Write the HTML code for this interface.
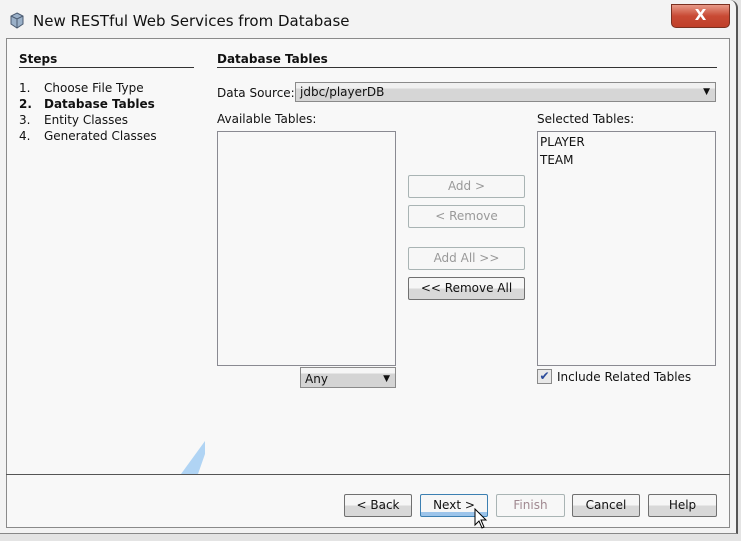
<!DOCTYPE html>
<html><head><style>
body{margin:0;width:741px;height:541px;background:#e4e4e4;position:relative;overflow:hidden;font-family:"DejaVu Sans","Liberation Sans",sans-serif;font-size:12px;color:#111}
.a{position:absolute}
.win{left:0;top:0;width:736px;height:533px;background:#f3f3f3;border-right:2px solid #555;border-bottom:1px solid #888;border-top-right-radius:8px}
.panel{left:6px;top:38px;width:722px;height:488px;background:#f8f8f8;border:1px solid #8a8a8a}
.btn{position:absolute;height:21px;border:1px solid #707070;border-radius:2px;background:linear-gradient(#f6f6f6 50%,#d8d8d8 50%);text-align:center;line-height:21px;font-size:12px;color:#111;box-sizing:border-box}
.dis{border-color:#a9b4b4;background:#f7f7f7;color:#999}
.list{border:1px solid #8a8a92;background:#f8f8f8}
.n{display:inline-block;width:25px}
</style></head><body>
<div class="a win"></div>
<svg class="a" style="left:9px;top:12px" width="16" height="17" viewBox="0 0 16 17"><path d="M8 1L14 4V12L8 16L2 12V4Z" fill="#9ab0c8" stroke="#4a5a70"/><path d="M2 4L8 7L14 4M8 7V16" fill="none" stroke="#4a5a70"/></svg>
<div class="a" style="left:33px;top:12px;font-size:15px;color:#111">New RESTful Web Services from Database</div>
<div class="a" style="left:671px;top:4px;width:57px;height:22px;border:1px solid #7a3020;border-radius:0 0 5px 5px;background:linear-gradient(#e89a88,#c84a34 50%,#c0402a);color:#fff;text-align:center;font-weight:bold;font-size:15px;line-height:21px">X</div>
<div class="a panel"></div>
<div class="a" style="left:19px;top:52px;font-weight:bold">Steps</div>
<div class="a" style="left:19px;top:67px;width:175px;border-top:1px solid #333"></div>
<div class="a" style="left:19px;top:80px;line-height:16px"><span class="n">1.</span>Choose File Type<br><b><span class="n">2.</span>Database Tables</b><br><span class="n">3.</span>Entity Classes<br><span class="n">4.</span>Generated Classes</div>
<div class="a" style="left:217px;top:52px;font-weight:bold">Database Tables</div>
<div class="a" style="left:217px;top:67px;width:500px;border-top:1px solid #333"></div>
<div class="a" style="left:217px;top:86px">Data Source:</div>
<div class="a" style="left:295px;top:82px;width:421px;height:20px;border:1px solid #8a8a8a;background:linear-gradient(#f0f0f0 30%,#d6d6d6 30%);box-sizing:border-box;padding-left:4px;line-height:19px">jdbc/playerDB<span style="position:absolute;right:5px;top:0;font-size:9px">▼</span></div>
<div class="a" style="left:217px;top:112px">Available Tables:</div>
<div class="a" style="left:537px;top:112px">Selected Tables:</div>
<div class="a list" style="left:217px;top:131px;width:177px;height:233px"></div>
<div class="a list" style="left:537px;top:131px;padding:1px 2px;box-sizing:border-box;width:179px;height:235px;line-height:18px">PLAYER<br>TEAM</div>
<div class="a" style="left:300px;top:367px;width:96px;height:21px;border:1px solid #8a8a8a;background:linear-gradient(#f6f6f6 30%,#d4d4d4 30%);box-sizing:border-box;padding-left:4px;line-height:22px">Any<span style="position:absolute;right:5px;top:0;font-size:9px">▼</span></div>
<div class="btn dis" style="left:408px;top:175px;width:117px;height:23px;line-height:21px">Add &gt;</div>
<div class="btn dis" style="left:408px;top:205px;width:117px;height:23px;line-height:21px">&lt; Remove</div>
<div class="btn dis" style="left:408px;top:247px;width:117px;height:23px;line-height:21px">Add All &gt;&gt;</div>
<div class="btn" style="left:408px;top:277px;width:117px;height:23px;line-height:21px">&lt;&lt; Remove All</div>
<div class="a" style="left:537px;top:369px;width:15px;height:15px;border:1px solid #8a8a8a;background:#e8e8e8;box-sizing:border-box;color:#2a4a9a;font-size:12px;line-height:13px;text-align:center">✔</div>
<div class="a" style="left:557px;top:370px">Include Related Tables</div>
<svg class="a" style="left:178px;top:440px" width="30" height="36"><path d="M27 1L27 14L20 34L3 34Z" fill="#b0d4f4"/></svg>
<div class="a" style="left:6px;top:474px;width:724px;border-top:1px solid #555"></div>
<div class="btn" style="left:344px;top:494px;width:68px;height:23px;line-height:21px">&lt; Back</div>
<div class="btn" style="left:420px;top:494px;width:68px;height:23px;line-height:21px;border-color:#3c7fb1;background:linear-gradient(#f6f6f6 80%,#9cc4ea 80%)">Next &gt;</div>
<div class="btn dis" style="left:496px;top:494px;width:69px;height:23px;line-height:21px;color:#a08890">Finish</div>
<div class="btn" style="left:572px;top:494px;width:68px;height:23px;line-height:21px">Cancel</div>
<div class="btn" style="left:648px;top:494px;width:69px;height:23px;line-height:21px">Help</div>
<svg class="a" style="left:474px;top:508px" width="14" height="22"><path d="M1 1V17L5 13L8 20L10 19L7 12L12 12Z" fill="#fff" stroke="#000"/></svg>
</body></html>
